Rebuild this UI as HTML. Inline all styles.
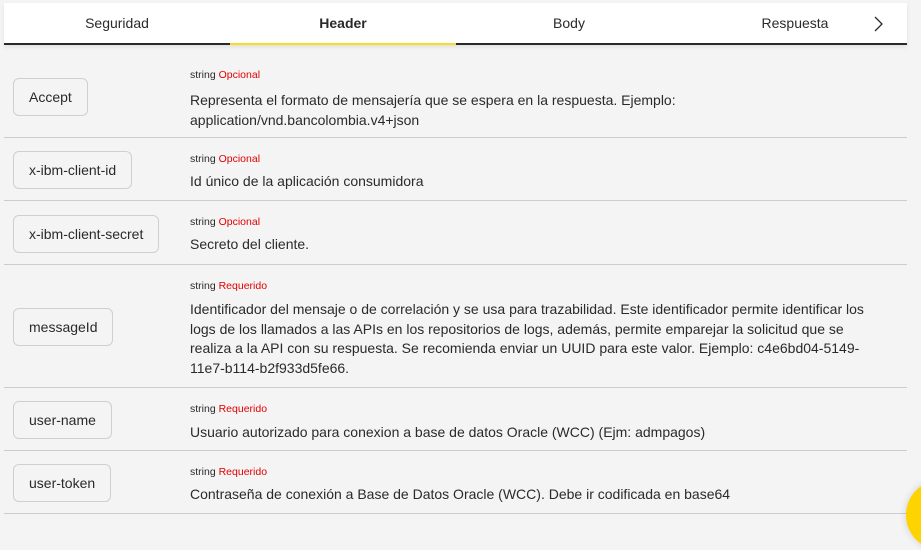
<!DOCTYPE html>
<html><head><meta charset="utf-8"><style>
body{margin:0;width:921px;height:522px;background:#f4f4f4;font-family:"Liberation Sans",sans-serif;color:#2c2a29;overflow:hidden;position:relative}
.tabs{position:absolute;left:4px;top:3px;width:903px;height:40px;background:#fff;border-bottom:2px solid #2c2a29;box-shadow:0 2px 4px rgba(0,0,0,.08)}
.tab{position:absolute;top:0;height:40px;line-height:40px;text-align:center;font-size:14px;width:226px}
.hl{position:absolute;left:226px;top:40px;width:226px;height:2px;background:#fdda24}
.row{position:absolute;left:4px;width:903px;border-bottom:1px solid #ccc}
.btn{position:absolute;left:9px;height:36px;line-height:36px;padding:0 15px;border:1px solid #cfcfcf;border-radius:6px;font-size:14px;background:#f4f4f4}
.lab{position:absolute;left:186px;font-size:10.5px}
.lab span{color:#e20000}
.desc{position:absolute;left:186px;width:710px;font-size:14px;line-height:19.5px;white-space:nowrap}
</style></head><body>
<div class="tabs">
<div class="tab" style="left:0">Seguridad</div>
<div class="tab" style="left:226px;font-weight:bold">Header</div>
<div class="tab" style="left:452px">Body</div>
<div class="tab" style="left:678px">Respuesta</div>
<svg style="position:absolute;left:869px;top:12px" width="12" height="18"><path d="M2 2 L9 9 L2 16" fill="none" stroke="#2c2a29" stroke-width="1.3"/></svg>
<div class="hl"></div>
</div>
<div class="row" style="top:46px;height:91px"><div class="btn" style="top:32px">Accept</div><div class="lab" style="top:23px">string <span>Opcional</span></div><div class="desc" style="top:45px">Representa el formato de mensajería que se espera en la respuesta. Ejemplo:<br>application/vnd.bancolombia.v4+json</div></div>
<div class="row" style="top:138px;height:62px"><div class="btn" style="top:13px">x-ibm-client-id</div><div class="lab" style="top:15px">string <span>Opcional</span></div><div class="desc" style="top:34px">Id único de la aplicación consumidora</div></div>
<div class="row" style="top:201px;height:63px"><div class="btn" style="top:14px">x-ibm-client-secret</div><div class="lab" style="top:15px">string <span>Opcional</span></div><div class="desc" style="top:34px">Secreto del cliente.</div></div>
<div class="row" style="top:265px;height:122px"><div class="btn" style="top:43px">messageId</div><div class="lab" style="top:15px">string <span>Requerido</span></div><div class="desc" style="top:35px">Identificador del mensaje o de correlación y se usa para trazabilidad. Este identificador permite identificar los<br>logs de los llamados a las APIs en los repositorios de logs, además, permite emparejar la solicitud que se<br>realiza a la API con su respuesta. Se recomienda enviar un UUID para este valor. Ejemplo: c4e6bd04-5149-<br>11e7-b114-b2f933d5fe66.</div></div>
<div class="row" style="top:388px;height:62px"><div class="btn" style="top:13px">user-name</div><div class="lab" style="top:15px">string <span>Requerido</span></div><div class="desc" style="top:35px">Usuario autorizado para conexion a base de datos Oracle (WCC) (Ejm: admpagos)</div></div>
<div class="row" style="top:451px;height:62px"><div class="btn" style="top:13px">user-token</div><div class="lab" style="top:15px">string <span>Requerido</span></div><div class="desc" style="top:34px">Contraseña de conexión a Base de Datos Oracle (WCC). Debe ir codificada en base64</div></div>
<div style="position:absolute;left:906px;top:480px;width:70px;height:70px;border-radius:50%;background:#fdd300;box-shadow:0 0 8px rgba(0,0,0,.15)"></div>
</body></html>
